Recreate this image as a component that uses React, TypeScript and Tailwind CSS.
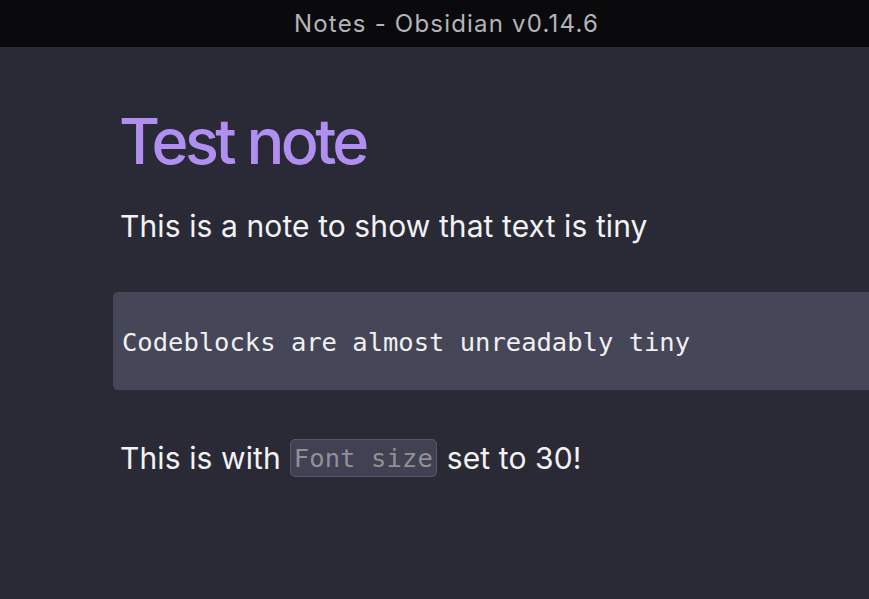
import React from "react";

const App = () => {
  return (
    <div className="w-[869px] h-[599px] overflow-hidden bg-[#2a2a37] flex flex-col" style={{ fontFamily: "Inter, 'Noto Sans', sans-serif" }}>
      {/* title bar */}
      <div className="h-[47px] shrink-0 bg-[#0a0a0c] flex items-center justify-center pl-[24px]">
        <span className="text-[24px] text-[#b4b4b8] tracking-[1.2px]">Notes - Obsidian v0.14.6</span>
      </div>

      {/* note */}
      <div className="flex flex-col pl-[119px] pt-[56px]">
        <h1 className="text-[63px] leading-[76px] font-medium text-[#b18ff0] tracking-[-3.6px]">Test note</h1>
        <p className="mt-[27px] ml-[1px] text-[30px] leading-[40px] text-[#f2f2f2] tracking-[0.1px]">This is a note to show that text is tiny</p>

        <div className="mt-[46px] -ml-[6px] w-[900px] h-[98px] bg-[#464659] rounded-[5px] flex items-center pl-[9px] pt-[3px]">
          <code className="text-[25.5px] text-[#f0f0f0]" style={{ fontFamily: "'DejaVu Sans Mono', 'Liberation Mono', monospace" }}>
            Codeblocks are almost unreadably tiny
          </code>
        </div>

        <p className="mt-[48px] ml-[1px] text-[30px] leading-[40px] text-[#f2f2f2] flex items-center tracking-[0.1px]">
          <span>This is with</span>
          <code
            className="ml-[9px] mr-[10px] h-[38px] px-[3px] flex items-center bg-[#414153] border border-[#575769] rounded-[5px] text-[25.5px] text-[#909099]"
            style={{ fontFamily: "'DejaVu Sans Mono', 'Liberation Mono', monospace" }}
          >
            Font size
          </code>
          <span>set to 30!</span>
        </p>
      </div>
    </div>
  );
};

export default App;
